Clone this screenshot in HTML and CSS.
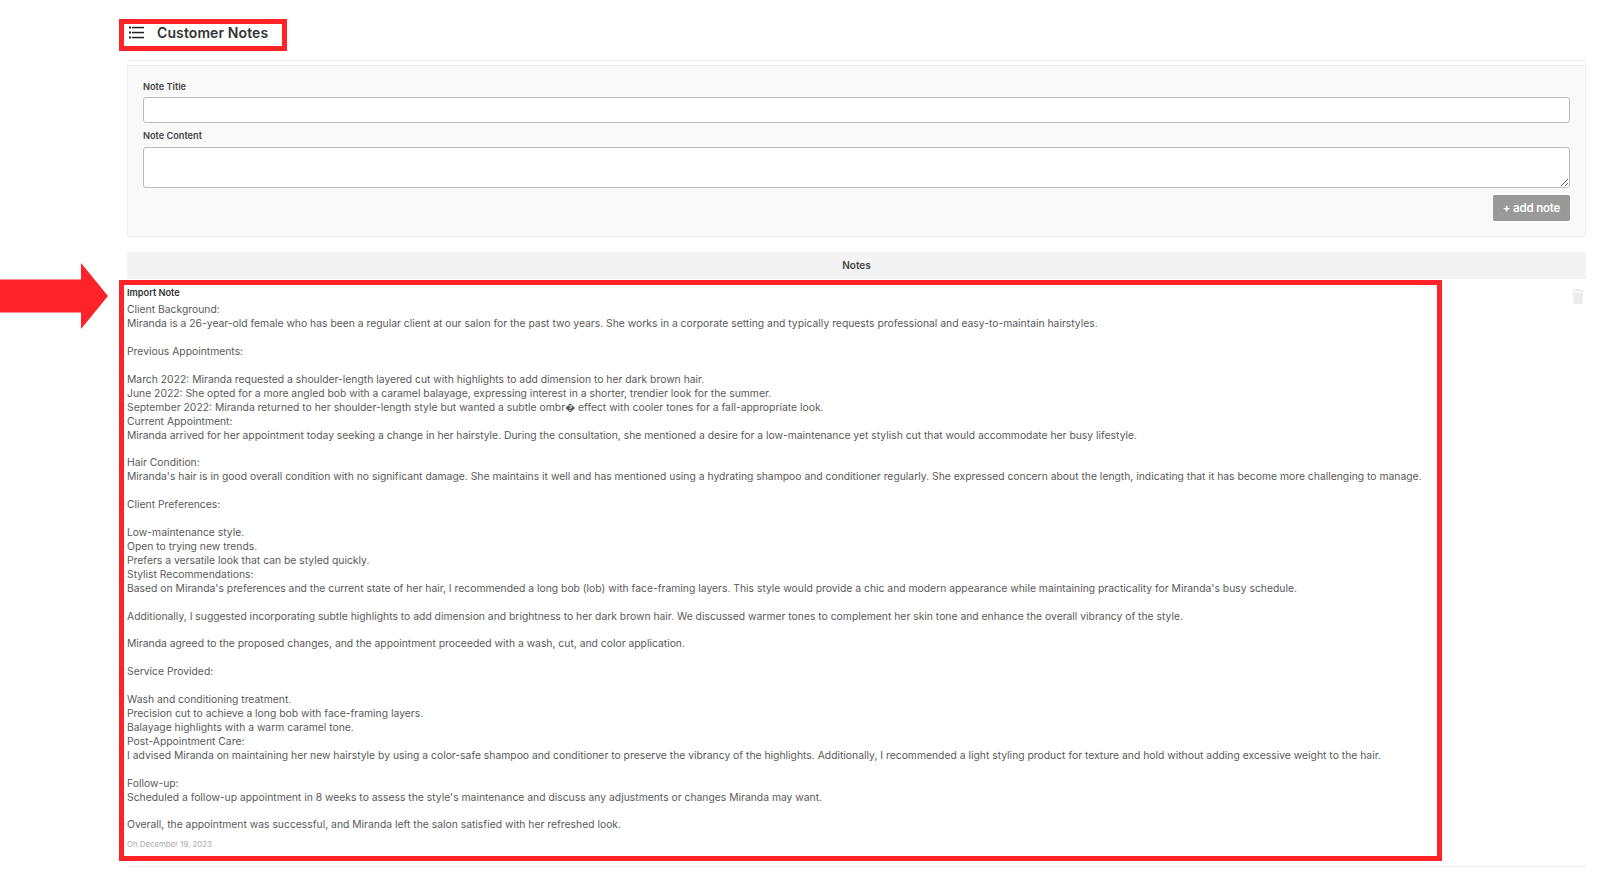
FILE: index.html
```html
<!DOCTYPE html>
<html lang="en">
<head>
<meta charset="utf-8">
<title>Customer Notes</title>
<link rel="stylesheet" href="styles.css">
</head>
<body>
<main class="page">
  <header class="page-head">
    <svg class="list-icon" width="15" height="13" viewBox="0 0 15 13" aria-hidden="true">
      <g fill="#222"><rect x="0" y="0.5" width="2" height="2"/><rect x="0" y="5.5" width="2" height="2"/><rect x="0" y="10.500" width="2" height="2"/><rect x="3" y="0.800" width="12" height="1.500"/><rect x="3" y="5.800" width="12" height="1.500"/><rect x="3" y="10.800" width="12" height="1.500"/></g>
    </svg>
    <h1 class="page-title">Customer Notes</h1>
  </header>
  <form class="note-form">
    <label class="field-label" for="note-title">Note Title</label>
    <input class="field-input" id="note-title" type="text">
    <label class="field-label field-label-second" for="note-content">Note Content</label>
    <textarea class="field-area" id="note-content"></textarea>
    <div class="form-actions"><button class="add-button" type="button">+ add note</button></div>
  </form>
  <h2 class="notes-head">Notes</h2>
  <article class="note">
    <div class="note-main">
      <h3 class="note-title">Import Note</h3>
      <p class="note-body">Client Background:
Miranda is a 26-year-old female who has been a regular client at our salon for the past two years. She works in a corporate setting and typically requests professional and easy-to-maintain hairstyles.

Previous Appointments:

March 2022: Miranda requested a shoulder-length layered cut with highlights to add dimension to her dark brown hair.
June 2022: She opted for a more angled bob with a caramel balayage, expressing interest in a shorter, trendier look for the summer.
September 2022: Miranda returned to her shoulder-length style but wanted a subtle ombr� effect with cooler tones for a fall-appropriate look.
Current Appointment:
Miranda arrived for her appointment today seeking a change in her hairstyle. During the consultation, she mentioned a desire for a low-maintenance yet stylish cut that would accommodate her busy lifestyle.

Hair Condition:
Miranda's hair is in good overall condition with no significant damage. She maintains it well and has mentioned using a hydrating shampoo and conditioner regularly. She expressed concern about the length, indicating that it has become more challenging to manage.

Client Preferences:

Low-maintenance style.
Open to trying new trends.
Prefers a versatile look that can be styled quickly.
Stylist Recommendations:
Based on Miranda's preferences and the current state of her hair, I recommended a long bob (lob) with face-framing layers. This style would provide a chic and modern appearance while maintaining practicality for Miranda's busy schedule.

Additionally, I suggested incorporating subtle highlights to add dimension and brightness to her dark brown hair. We discussed warmer tones to complement her skin tone and enhance the overall vibrancy of the style.

Miranda agreed to the proposed changes, and the appointment proceeded with a wash, cut, and color application.

Service Provided:

Wash and conditioning treatment.
Precision cut to achieve a long bob with face-framing layers.
Balayage highlights with a warm caramel tone.
Post-Appointment Care:
I advised Miranda on maintaining her new hairstyle by using a color-safe shampoo and conditioner to preserve the vibrancy of the highlights. Additionally, I recommended a light styling product for texture and hold without adding excessive weight to the hair.

Follow-up:
Scheduled a follow-up appointment in 8 weeks to assess the style's maintenance and discuss any adjustments or changes Miranda may want.

Overall, the appointment was successful, and Miranda left the salon satisfied with her refreshed look.</p>
      <p class="note-date">On December 19, 2023</p>
    </div>
    <svg class="trash" width="12" height="15" viewBox="0 0 12 15" aria-hidden="true">
      <path fill="#ececec" d="M4 0h4l.6 1H12v1.600H0V1h3.400zM.8 3.600h10.400L10.400 15H1.600z"/>
    </svg>
  </article>
</main>
<div class="callout callout-head"></div>
<div class="callout callout-note"></div>
<svg class="arrow" width="108" height="66" viewBox="0 0 108 66" aria-hidden="true">
  <path fill="#fd2329" d="M0 16.500H81V0L108 33 81 66V49.500H0z"/>
</svg>
</body>
</html>
```

FILE: styles.css
```css
* { box-sizing: border-box; }
html, body { margin: 0; background: #fff; }
body {
  font-family: Inter, "Liberation Sans", sans-serif;
  color: #5a5a5a;
  height: 890px;
  overflow: hidden;
}
.page { margin: 0 11px 0 127px; }
.page-head {
  display: flex;
  align-items: center;
  gap: 13px;
  height: 61px;
  padding: 8px 0 4px 2px;
  border-bottom: 1px solid #eee;
}
.page-title { margin: 0; font-size: 14px; font-weight: 600; color: #333; letter-spacing: 0.1px; }
.note-form {
  margin-top: 4px;
  height: 172px;
  padding: 13px 15px 0;
  background: #f9f9f9;
  border: 1px solid #eee;
}
.field-label { display: block; font-size: 9.2px; line-height: 16px; font-weight: 600; color: #444; }
.field-label-second { margin-top: 4px; line-height: 17px; }
.field-input, .field-area {
  display: block;
  width: 100%;
  background: #fff;
  border: 1px solid #bbb;
  border-radius: 3px;
  padding: 0;
}
.field-input { height: 26px; margin: 2px 0 0; }
.field-area { height: 41px; margin: 3px 0 0; }
.form-actions { display: flex; justify-content: flex-end; margin-top: 7px; }
.add-button {
  width: 77px;
  height: 26px;
  padding: 0;
  border: 0;
  border-radius: 2px;
  background: #999;
  color: #fff;
  font: 600 11.5px Inter, sans-serif;
  letter-spacing: -0.2px;
}
.notes-head {
  margin: 15px 0 0;
  height: 27px;
  background: #f3f3f3;
  font-size: 10px;
  line-height: 27px;
  font-weight: 600;
  text-align: center;
  color: #444;
}
.note {
  display: flex;
  justify-content: space-between;
  align-items: flex-start;
  padding-top: 7px;
  height: 588px;
  border-bottom: 1px solid #eee;
}
.note-title { margin: 0 0 4.3px; font-size: 9.2px; line-height: 13px; font-weight: 600; color: #333; }
.note-body { margin: 0; font-size: 10.35px; line-height: 13.92px; white-space: pre-line; }
.note-date { margin: 5.7px 0 0; font-size: 7.8px; line-height: 12px; color: #aaa; }
.trash { margin: 3px 2px 0 0; }
.callout { position: absolute; border: 5px solid #fd2329; }
.callout-head { left: 119px; top: 19px; width: 168px; height: 32px; }
.callout-note { left: 119px; top: 280px; width: 1323px; height: 581px; }
.arrow { position: absolute; left: 0; top: 263px; }
```
